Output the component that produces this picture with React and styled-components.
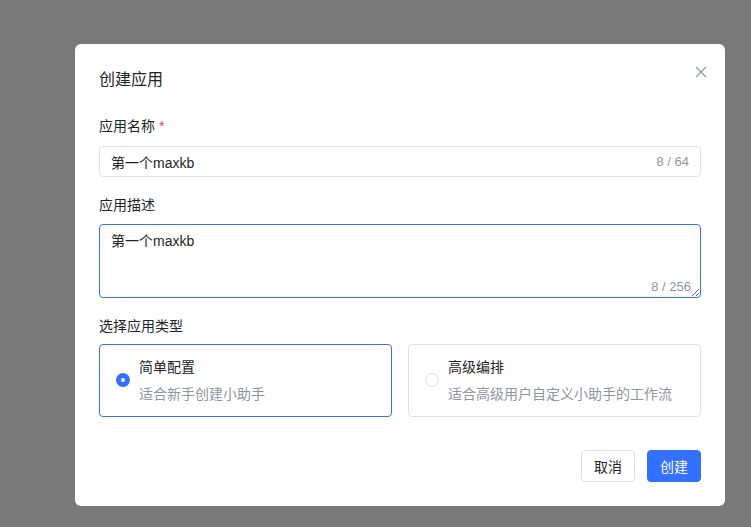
import React, { useState } from 'react';
import styled, { createGlobalStyle } from 'styled-components';

const GlobalStyle = createGlobalStyle`
	html, body {
		margin: 0;
		padding: 0;
		height: 100%;
	}
	body {
		font-family: 'Liberation Sans', 'Noto Sans CJK SC', 'Noto Sans', sans-serif;
		color: #1f2329;
		background: #787978;
	}
	#root {
		height: 100%;
	}
`;

const Overlay = styled.div`
	width: 751px;
	height: 527px;
	box-sizing: border-box;
	padding: 44px 0 0 75px;
	background: #787978;
	overflow: hidden;
`;

const Dialog = styled.div`
	width: 650px;
	box-sizing: border-box;
	background: #fff;
	border-radius: 6px;
	padding: 24px;
`;

const Header = styled.div`
	display: flex;
	align-items: center;
	justify-content: space-between;
	height: 24px;
	margin-bottom: 23px;
`;

const Title = styled.h2`
	margin: 0;
	font-size: 16px;
	font-weight: 400;
	line-height: 24px;
	color: #1f2329;
`;

const CloseBtn = styled.button`
	border: none;
	background: none;
	padding: 0;
	width: 16px;
	height: 16px;
	display: flex;
	align-items: center;
	justify-content: center;
	color: #8f959e;
	margin-top: -16px;
	margin-right: -8px;
	cursor: pointer;
`;

const FormItem = styled.div`
	margin-bottom: ${(p) => p.$mb ?? 17}px;
`;

const Label = styled.label`
	display: block;
	font-size: 14px;
	line-height: 22px;
	color: #1f2329;
	margin-bottom: ${(p) => p.$mb ?? 9}px;
	span {
		color: #f54a45;
		margin-left: 4px;
	}
`;

const InputWrap = styled.div`
	display: flex;
	align-items: center;
	height: 31px;
	box-sizing: border-box;
	border: 1px solid #dee0e3;
	border-radius: 4px;
	padding: 0 11px;
	input {
		flex: 1;
		border: none;
		outline: none;
		font: inherit;
		font-size: 14px;
		color: #1f2329;
		padding: 0;
		background: transparent;
	}
`;

const Count = styled.span`
	font-size: 13px;
	color: #8f959e;
	white-space: nowrap;
`;

const TextareaWrap = styled.div`
	position: relative;
	textarea {
		display: block;
		width: 100%;
		height: 74px;
		box-sizing: border-box;
		border: 1px solid #3370ff;
		border-radius: 4px;
		padding: 5px 11px;
		font: inherit;
		font-size: 14px;
		line-height: 22px;
		color: #1f2329;
		outline: none;
		resize: vertical;
	}
	${Count} {
		position: absolute;
		right: 10px;
		bottom: 4px;
		background: #fff;
	}
`;

const Cards = styled.div`
	display: grid;
	grid-template-columns: 1fr 1fr;
	gap: 16px;
`;

const Card = styled.div`
	display: flex;
	align-items: center;
	gap: 9px;
	height: 73px;
	box-sizing: border-box;
	padding: 0 16px;
	border: 1px solid ${(p) => (p.$active ? '#3370ff' : '#dee0e3')};
	border-radius: 4px;
	cursor: pointer;
`;

const Radio = styled.span`
	width: 14px;
	height: 14px;
	box-sizing: border-box;
	border-radius: 50%;
	flex-shrink: 0;
	margin-top: -2px;
	border: ${(p) => (p.$checked ? '5px solid #3370ff' : '1px solid #dcdfe6')};
	background: #fff;
`;

const CardText = styled.div`
	display: flex;
	flex-direction: column;
	gap: 5px;
`;

const CardTitle = styled.div`
	font-size: 14px;
	line-height: 22px;
	color: #1f2329;
`;

const CardDesc = styled.div`
	font-size: 14px;
	line-height: 22px;
	color: #8f959e;
`;

const Footer = styled.div`
	display: flex;
	justify-content: flex-end;
	gap: 12px;
	margin-top: 33px;
`;

const Button = styled.button`
	height: 32px;
	width: 54px;
	box-sizing: border-box;
	padding: 0;
	border-radius: 4px;
	font: inherit;
	font-size: 14px;
	cursor: pointer;
	border: 1px solid ${(p) => (p.$primary ? '#3370ff' : '#dee0e3')};
	background: ${(p) => (p.$primary ? '#3370ff' : '#fff')};
	color: ${(p) => (p.$primary ? '#fff' : '#1f2329')};
`;

const types = [
	{ key: 'simple', title: '简单配置', desc: '适合新手创建小助手' },
	{ key: 'workflow', title: '高级编排', desc: '适合高级用户自定义小助手的工作流' }
];

const App = () => {
	const [type, setType] = useState('simple');
	const name = '第一个maxkb';
	const desc = '第一个maxkb';

	return (
		<>
			<GlobalStyle />
			<Overlay>
				<Dialog>
					<Header>
						<Title>创建应用</Title>
						<CloseBtn aria-label='close'>
							<svg width='12' height='12' viewBox='0 0 12 12'>
								<path d='M1 1 L11 11 M11 1 L1 11' stroke='currentColor' strokeWidth='1.2' fill='none' />
							</svg>
						</CloseBtn>
					</Header>

					<FormItem>
						<Label>
							应用名称<span>*</span>
						</Label>
						<InputWrap>
							<input defaultValue={name} />
							<Count>8 / 64</Count>
						</InputWrap>
					</FormItem>

					<FormItem>
						<Label $mb={8}>应用描述</Label>
						<TextareaWrap>
							<textarea defaultValue={desc} />
							<Count>8 / 256</Count>
						</TextareaWrap>
					</FormItem>

					<FormItem $mb={0}>
						<Label $mb={7}>选择应用类型</Label>
						<Cards>
							{types.map((t) => (
								<Card key={t.key} $active={type === t.key} onClick={() => setType(t.key)}>
									<Radio $checked={type === t.key} />
									<CardText>
										<CardTitle>{t.title}</CardTitle>
										<CardDesc>{t.desc}</CardDesc>
									</CardText>
								</Card>
							))}
						</Cards>
					</FormItem>

					<Footer>
						<Button>取消</Button>
						<Button $primary>创建</Button>
					</Footer>
				</Dialog>
			</Overlay>
		</>
	);
};

export default App;
